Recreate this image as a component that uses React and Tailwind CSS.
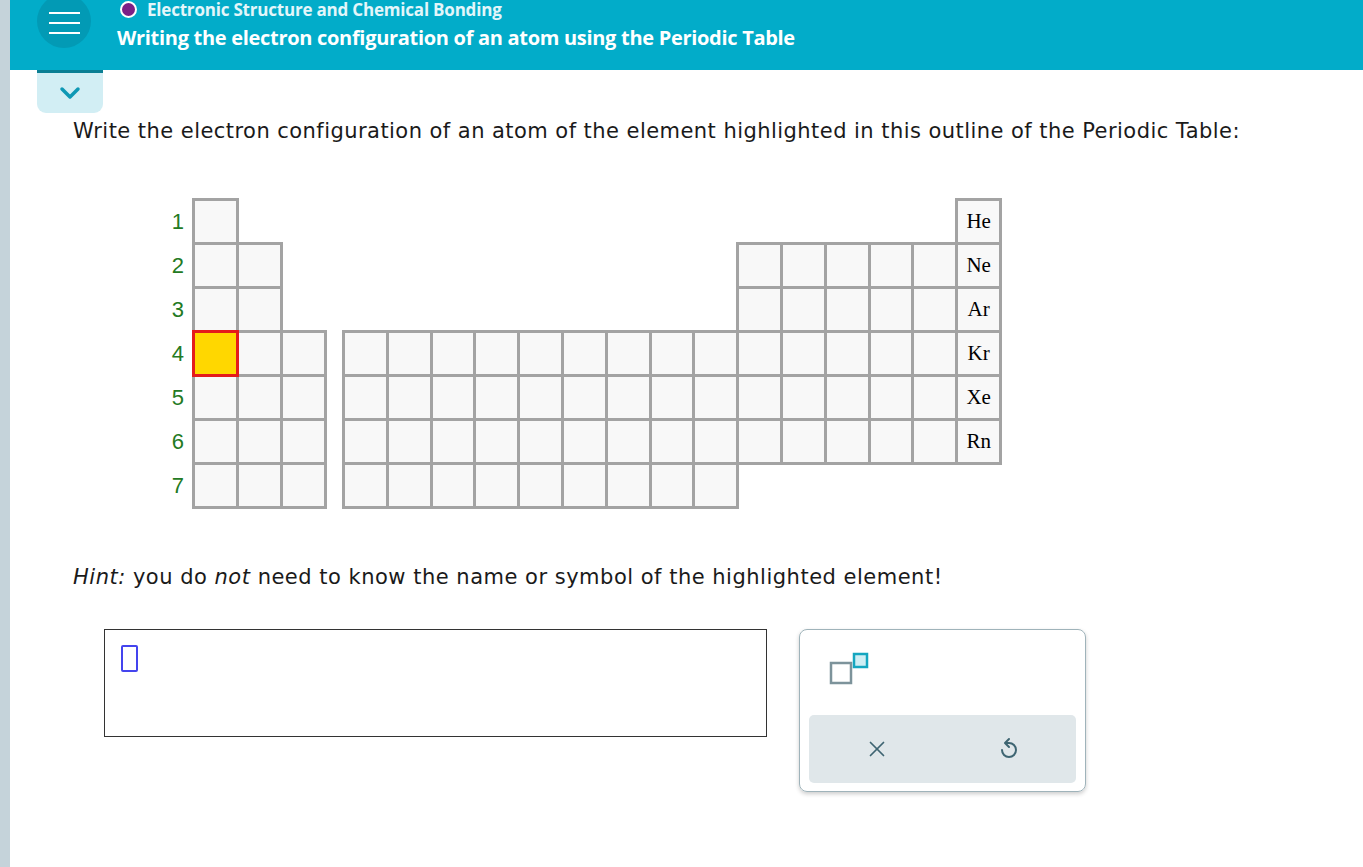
import { X } from 'lucide-react';

const rows = [
  { n: 1, cols: [0, 18], noble: 'He' },
  { n: 2, cols: [0, 1, 13, 14, 15, 16, 17, 18], noble: 'Ne' },
  { n: 3, cols: [0, 1, 13, 14, 15, 16, 17, 18], noble: 'Ar' },
  { n: 4, cols: [0, 1, 2, 4, 5, 6, 7, 8, 9, 10, 11, 12, 13, 14, 15, 16, 17, 18], noble: 'Kr' },
  { n: 5, cols: [0, 1, 2, 4, 5, 6, 7, 8, 9, 10, 11, 12, 13, 14, 15, 16, 17, 18], noble: 'Xe' },
  { n: 6, cols: [0, 1, 2, 4, 5, 6, 7, 8, 9, 10, 11, 12, 13, 14, 15, 16, 17, 18], noble: 'Rn' },
  { n: 7, cols: [0, 1, 2, 4, 5, 6, 7, 8, 9, 10, 11, 12], noble: null },
];

const colStart = [
  'col-start-1', 'col-start-2', 'col-start-3', 'col-start-4', 'col-start-5', 'col-start-6',
  'col-start-7', 'col-start-8', 'col-start-9', 'col-start-10', 'col-start-11', 'col-start-12',
  'col-start-13', 'col-start-14', 'col-start-15', 'col-start-16', 'col-start-17', 'col-start-18',
  'col-start-19',
];
const rowStart = ['row-start-1', 'row-start-2', 'row-start-3', 'row-start-4', 'row-start-5', 'row-start-6', 'row-start-7'];

const Cell = ({ r, c, label }) => {
  const highlighted = r === 4 && c === 0;
  return (
    <div
      className={`${rowStart[r - 1]} ${colStart[c]} w-[47px] h-[47px] border-[3px] flex items-center justify-center text-[21px] text-black font-['Liberation_Serif',serif] ${
        highlighted ? 'bg-[#ffd700] border-[#e41b1b] relative z-10' : 'bg-[#f8f8f8] border-[#a3a3a3]'
      }`}
    >
      {label}
    </div>
  );
};

const PeriodicOutline = () => (
  <div className="flex mt-[54px] ml-[92px]">
    <div className="flex flex-col w-[29px] pt-[1px] pr-[10px]">
      {rows.map((row) => (
        <div key={row.n} className="h-[44px] flex items-center justify-end text-[22px] text-[#237a23] font-['Liberation_Sans',sans-serif]">
          {row.n}
        </div>
      ))}
    </div>
    <div className="grid grid-cols-[repeat(3,44px)_18px_repeat(15,43.8px)] grid-rows-[repeat(7,44px)] w-[830px] h-[311px] -ml-[2px]">
      {rows.map((row) =>
        row.cols.map((c) => (
          <Cell key={`${row.n}-${c}`} r={row.n} c={c} label={c === 18 ? row.noble : null} />
        ))
      )}
    </div>
  </div>
);

const SuperscriptIcon = () => (
  <svg width="44" height="36" viewBox="0 0 44 36">
    <rect x="2" y="11" width="20" height="20" fill="white" stroke="#7d939b" strokeWidth="2.5" />
    <rect x="25" y="2" width="13" height="13" fill="#cfeef4" stroke="#15a6c0" strokeWidth="2.5" />
  </svg>
);

const UndoIcon = () => (
  <svg width="22" height="24" viewBox="0 0 22 24" fill="none" stroke="#3e6572" strokeWidth="2" strokeLinecap="round" strokeLinejoin="round">
    <path d="M8 6 H11 A7 7 0 1 1 4 13" />
    <path d="M11 2 L7 6 L11 10" />
  </svg>
);

export default function App() {
  return (
    <div className="flex min-h-[867px] bg-white font-['DejaVu_Sans',sans-serif]">
      <div className="w-[10px] shrink-0 bg-[#c5d3da]" />
      <div className="flex-1 flex flex-col">
        {/* Header */}
        <div className="h-[70px] bg-[#02acc9] flex relative overflow-hidden">
          <div className="w-[54px] h-[54px] rounded-full bg-[#029ab5] ml-[27px] -mt-[6px] flex flex-col items-center justify-center gap-[8px] pt-[4px] shrink-0">
            <div className="w-[31px] h-[2px] bg-white" />
            <div className="w-[31px] h-[2px] bg-white" />
            <div className="w-[31px] h-[2px] bg-white" />
          </div>
          <div className="ml-[26px] flex flex-col font-['Open_Sans',sans-serif] font-bold text-white">
            <div className="flex items-center gap-[10px] h-[19px] ml-[3px]">
              <span className="w-[17px] h-[17px] rounded-full bg-[#7b1f86] border-2 border-white" />
              <span className="text-[17px] text-[#e3f6fa] leading-[19px] tracking-[-0.2px]">Electronic Structure and Chemical Bonding</span>
            </div>
            <div className="text-[20px] mt-[9px] leading-none tracking-[-0.3px]">
              Writing the electron configuration of an atom using the Periodic Table
            </div>
          </div>
        </div>
        <div className="ml-[27px] w-[66px] h-[43px] bg-[#d2eef4] rounded-b-[9px] border-t-[3px] border-[#0a7e93] flex items-center justify-center">
          <svg width="24" height="16" viewBox="0 0 24 16">
            <path d="M4 4 L12 12 L20 4" fill="none" stroke="#0d98b4" strokeWidth="3.5" strokeLinecap="round" strokeLinejoin="round" />
          </svg>
        </div>

        {/* Question */}
        <div className="pl-[63px] flex flex-col">
          <p className="text-[21px] tracking-[0.45px] text-[#1a1a1a] mt-[5px] leading-[26px]">
            Write the electron configuration of an atom of the element highlighted in this outline of the Periodic Table:
          </p>
          <PeriodicOutline />
          <p className="text-[21px] tracking-[0.5px] text-[#1a1a1a] mt-[55px] leading-[26px]">
            <i>Hint:</i> you do <i>not</i> need to know the name or symbol of the highlighted element!
          </p>

          {/* Answer area */}
          <div className="flex items-start mt-[39px] ml-[31px] gap-[32px]">
            <div className="w-[663px] h-[108px] border border-[#333] pt-[15px] pl-[16px]">
              <div className="w-[17px] h-[27px] border-2 border-[#4444ee] rounded-[2px]" />
            </div>
            <div className="w-[287px] h-[163px] border border-[#9fb3ba] rounded-[8px] shadow-[0_2px_4px_rgba(0,0,0,0.2)] flex flex-col px-[9px] pt-[22px] pb-[8px]">
              <div className="ml-[20px] h-[64px]">
                <SuperscriptIcon />
              </div>
              <div className="h-[69px] bg-[#e0e7ea] rounded-[5px] flex items-center justify-between pl-[55px] pr-[56px]">
                <X size={26} strokeWidth={1.6} color="#3e6572" />
                <UndoIcon />
              </div>
            </div>
          </div>
        </div>
      </div>
    </div>
  );
}
